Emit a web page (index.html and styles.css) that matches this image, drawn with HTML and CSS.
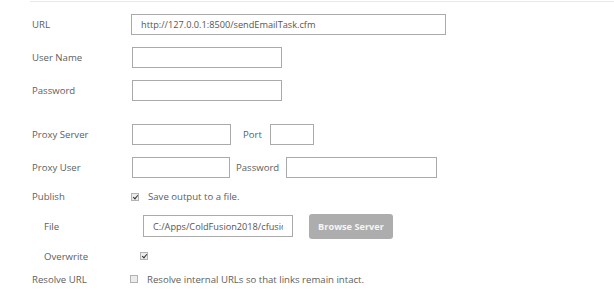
FILE: index.html
```html
<!DOCTYPE html>
<html lang="en">
<head>
    <meta charset="UTF-8">
    <title>Scheduled Task</title>
    <link rel="stylesheet" href="styles.css">
</head>
<body>
    <div class="task-panel">
        <form class="task-form">
            <div class="form-row row-url">
                <label class="field-label" for="url">URL</label>
                <input type="text" id="url" class="field url-field" value="http://127.0.0.1:8500/sendEmailTask.cfm">
            </div>
            <div class="form-row">
                <label class="field-label" for="username">User Name</label>
                <input type="text" id="username" class="field medium-field">
            </div>
            <div class="form-row">
                <label class="field-label" for="password">Password</label>
                <input type="password" id="password" class="field medium-field">
            </div>
            <div class="form-row row-proxy">
                <label class="field-label" for="proxyserver">Proxy Server</label>
                <input type="text" id="proxyserver" class="field proxy-server-field">
                <label class="inline-label port-label" for="port">Port</label>
                <input type="text" id="port" class="field port-field">
            </div>
            <div class="form-row">
                <label class="field-label" for="proxyuser">Proxy User</label>
                <input type="text" id="proxyuser" class="field proxy-user-field">
                <label class="inline-label proxy-pass-label" for="proxypassword">Password</label>
                <input type="password" id="proxypassword" class="field proxy-pass-field">
            </div>
            <div class="form-row row-publish">
                <span class="field-label">Publish</span>
                <label class="check-item">
                    <input type="checkbox" class="check" checked>
                    <span>Save output to a file.</span>
                </label>
            </div>
            <div class="form-row sub-row row-file">
                <label class="field-label" for="file">File</label>
                <input type="text" id="file" class="field file-field" value="C:/Apps/ColdFusion2018/cfusion/logs/task.log">
                <button type="button" class="browse-btn">Browse Server</button>
            </div>
            <div class="form-row sub-row row-overwrite">
                <label class="field-label" for="overwrite">Overwrite</label>
                <input type="checkbox" id="overwrite" class="check" checked>
            </div>
            <div class="form-row row-resolve">
                <span class="field-label">Resolve URL</span>
                <label class="check-item resolve-item">
                    <input type="checkbox" class="check">
                    <span>Resolve internal URLs so that links remain intact.</span>
                </label>
            </div>
        </form>
    </div>
</body>
</html>
```

FILE: styles.css
```css
/* Reset */
* {
    margin: 0;
    padding: 0;
    box-sizing: border-box;
}
body {
    font-family: 'Open Sans', 'Noto Sans', sans-serif;
    font-size: 9.6px;
    color: #606060;
    background: #fff;
}
.task-panel {
    margin: 1px 0 0 30px;
    border-top: 1px solid #e8e8e8;
}
.task-form {
    display: flex;
    flex-direction: column;
    padding: 6px 0 0 2px;
}
.form-row {
    display: flex;
    align-items: center;
    height: 33px;
}
.row-proxy {
    margin-top: 11px;
}
.row-publish {
    height: 25px;
}
.row-file {
    height: 34px;
}
.row-overwrite {
    height: 26px;
}
.row-resolve {
    height: 20px;
}
.field-label {
    width: 100px;
    flex-shrink: 0;
}
.sub-row {
    padding-left: 12px;
}
.sub-row .field-label {
    width: 99px;
}
.field {
    height: 21px;
    border: 1px solid #aaa;
    padding: 0 9px;
    font-family: inherit;
    font-size: 9.2px;
    color: #555;
    background: #fff;
    outline: none;
}
.url-field {
    width: 315px;
    margin-left: -1px;
}
.medium-field {
    width: 150px;
}
.inline-label {
    flex-shrink: 0;
}
.proxy-server-field {
    width: 99px;
}
.port-label {
    width: 27px;
    margin-left: 12px;
}
.port-field {
    width: 44px;
}
.proxy-user-field {
    width: 98px;
}
.proxy-pass-label {
    width: 50px;
    margin-left: 6px;
}
.proxy-pass-field {
    width: 151px;
}
.file-field {
    width: 150px;
    height: 22px;
}
.browse-btn {
    margin-left: 16px;
    width: 84px;
    height: 25px;
    border: none;
    border-radius: 3px;
    background: #adadad;
    color: #f5f5f5;
    font-family: inherit;
    font-size: 9.2px;
    font-weight: 700;
}
/* Checkboxes */
.check-item {
    display: flex;
    align-items: center;
    gap: 9px;
    margin-left: -1px;
}
.resolve-item {
    margin-left: -2px;
}
.check {
    appearance: none;
    -webkit-appearance: none;
    position: relative;
    width: 8px;
    height: 8px;
    border: 1px solid #b3b3b3;
    background: #ececec;
    margin: 0;
}
.row-overwrite .check {
    margin-left: -3px;
}
.check:checked::after {
    content: '';
    position: absolute;
    left: 2px;
    top: 0;
    width: 2px;
    height: 4px;
    border-right: 1.5px solid #333;
    border-bottom: 1.5px solid #333;
    transform: rotate(40deg);
}
```
